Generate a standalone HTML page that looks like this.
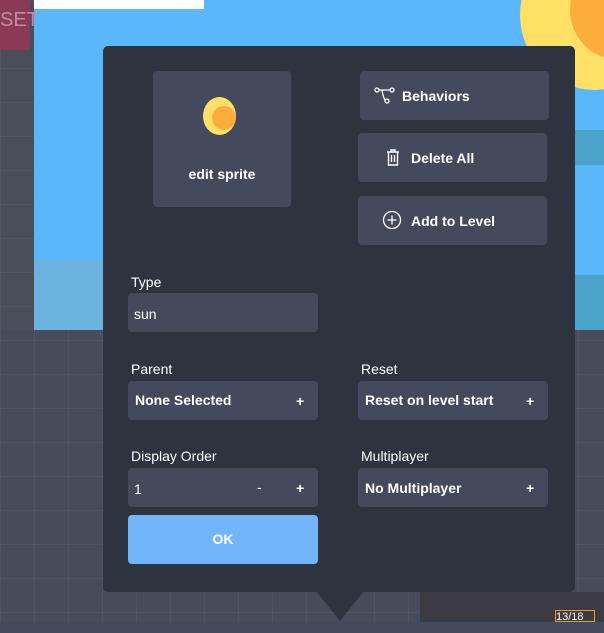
<!DOCTYPE html>
<html><head><meta charset="utf-8"><style>
*{margin:0;padding:0;box-sizing:border-box}
body{width:604px;height:633px;overflow:hidden;position:relative;font-family:"Liberation Sans",sans-serif;background:#474b5a}
.abs{position:absolute}
.btn{position:absolute;background:#434a5c;border-radius:4px;color:#fff;font-weight:bold;font-size:14px}
.lbl{position:absolute;color:#fff;font-size:14px}
.grid{background-color:#474b5a;background-image:linear-gradient(90deg,rgba(255,255,255,.05) 1px,transparent 1px),linear-gradient(rgba(255,255,255,.05) 1px,transparent 1px);background-size:34px 34px}
</style></head><body>
<div class="abs grid" style="left:0;top:0;width:604px;height:633px"></div>
<div class="abs" style="left:34px;top:0;width:570px;height:330px;background:#5bb7fb"></div>
<div class="abs grid" style="left:0;top:0;width:34px;height:330px;background-color:#4a4d5a"></div>
<div class="abs" style="left:0;top:0;width:30px;height:50px;background:#8a3a55;color:#c98aa0;font-size:20px;line-height:40px">SET</div>
<div class="abs" style="left:34px;top:0;width:170px;height:9px;background:#fff"></div>
<div class="abs" style="left:520px;top:-60px;width:150px;height:150px;border-radius:50%;background:#ffe066"></div>
<div class="abs" style="left:570px;top:-40px;width:100px;height:100px;border-radius:50%;background:#fbae3c"></div>
<div class="abs" style="left:575px;top:130px;width:29px;height:35px;background:#4aa3c8"></div>
<div class="abs" style="left:575px;top:275px;width:29px;height:55px;background:#4aa3c8"></div>
<div class="abs" style="left:34px;top:260px;width:69px;height:70px;background:#6cb4e0"></div>
<div class="abs" style="left:420px;top:592px;width:184px;height:30px;background:#3c3a42"></div>
<div class="abs" style="left:555px;top:610px;width:40px;height:12px;border:1px solid #d8a030;color:#fff;font-size:11px;line-height:12px">13/18</div>
<div class="abs" style="left:0;top:622px;width:604px;height:11px;background:#434a5c"></div>

<div class="abs" style="left:103px;top:46px;width:472px;height:546px;background:#2e3340;border-radius:5px"></div>
<svg class="abs" style="left:314px;top:591px" width="52" height="32"><polygon points="2,0 50,0 26,30" fill="#2e3340"/></svg>

<div class="btn" style="left:153px;top:71px;width:138px;height:136px"></div>
<div class="abs" style="left:203px;top:97px;width:33px;height:38px;border-radius:50%;background:#ffe066"></div>
<div class="abs" style="left:212px;top:106px;width:24px;height:24px;border-radius:50%;background:#fbae3c"></div>
<div class="abs" style="left:153px;top:166px;width:138px;text-align:center;color:#fff;font-size:14px;font-weight:bold">edit sprite</div>

<div class="btn" style="left:360px;top:71px;width:189px;height:49px">
<svg class="abs" style="left:14px;top:16px" width="22" height="18" fill="none" stroke="#fff" stroke-width="1.3"><circle cx="3" cy="3" r="2"/><circle cx="18" cy="3" r="2"/><circle cx="13" cy="14" r="2"/><path d="M5 3H16M8 3Q9 10 11 13"/></svg>
<span class="abs" style="left:42px;top:17px">Behaviors</span></div>
<div class="btn" style="left:358px;top:133px;width:189px;height:49px">
<svg class="abs" style="left:28px;top:16px" width="14" height="17" fill="none" stroke="#fff" stroke-width="1.4"><path d="M1 3H13M5 3V1H9V3M2.5 3V16H11.5V3M5.5 6V13M8.5 6V13"/></svg>
<span class="abs" style="left:53px;top:17px">Delete All</span></div>
<div class="btn" style="left:358px;top:196px;width:189px;height:49px">
<svg class="abs" style="left:24px;top:14px" width="20" height="20" fill="none" stroke="#fff" stroke-width="1.3"><circle cx="10" cy="10" r="8.5"/><path d="M10 5.5V14.5M5.5 10H14.5"/></svg>
<span class="abs" style="left:53px;top:17px">Add to Level</span></div>

<div class="lbl" style="left:131px;top:274px">Type</div>
<div class="btn" style="left:128px;top:293px;width:190px;height:39px;font-weight:normal"><span class="abs" style="left:6px;top:13px">sun</span></div>

<div class="lbl" style="left:131px;top:361px">Parent</div>
<div class="btn" style="left:128px;top:381px;width:190px;height:39px"><span class="abs" style="left:7px;top:11px">None Selected</span><span class="abs" style="left:168px;top:12px">+</span></div>
<div class="lbl" style="left:361px;top:361px">Reset</div>
<div class="btn" style="left:358px;top:381px;width:190px;height:39px"><span class="abs" style="left:7px;top:11px">Reset on level start</span><span class="abs" style="left:168px;top:12px">+</span></div>

<div class="lbl" style="left:131px;top:448px">Display Order</div>
<div class="btn" style="left:128px;top:468px;width:190px;height:39px;font-weight:normal"><span class="abs" style="left:6px;top:13px">1</span><span class="abs" style="left:129px;top:11px">-</span><span class="abs" style="left:168px;top:12px;font-weight:bold">+</span></div>
<div class="lbl" style="left:361px;top:448px">Multiplayer</div>
<div class="btn" style="left:358px;top:468px;width:190px;height:39px"><span class="abs" style="left:7px;top:12px">No Multiplayer</span><span class="abs" style="left:168px;top:12px">+</span></div>

<div class="btn" style="left:128px;top:515px;width:190px;height:49px;background:#73b5fb;text-align:center;line-height:49px">OK</div>
</body></html>
